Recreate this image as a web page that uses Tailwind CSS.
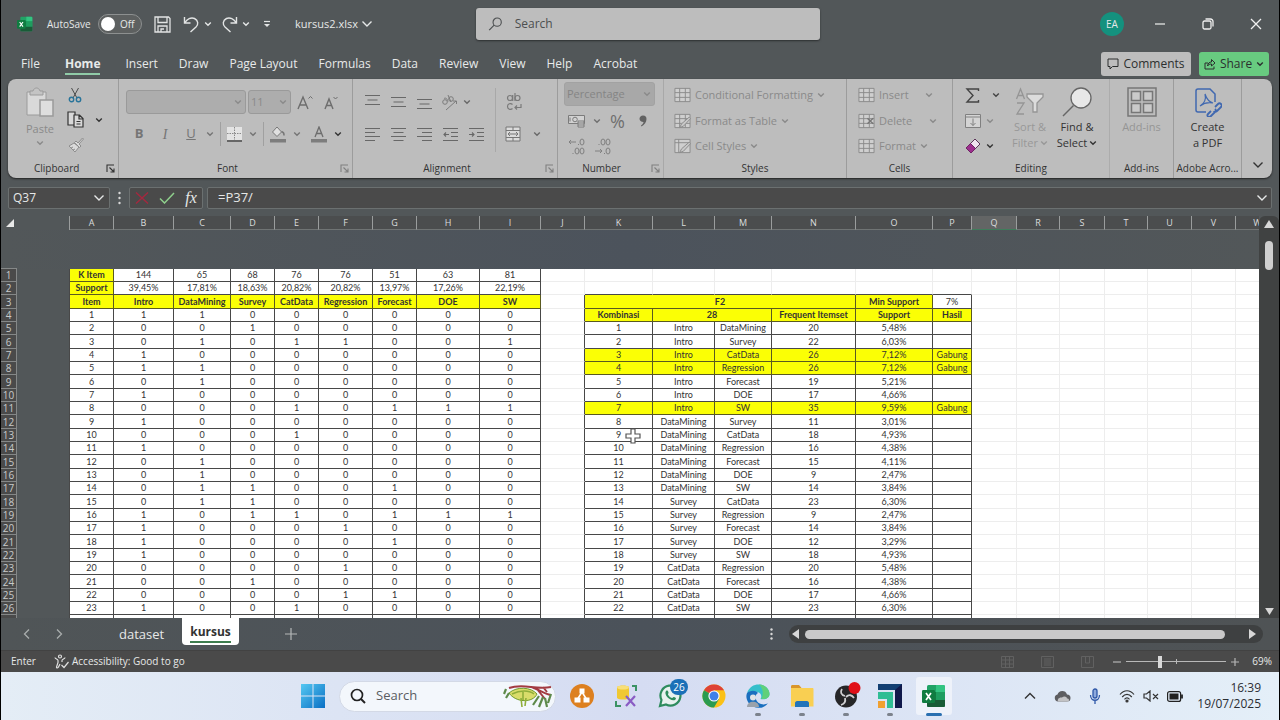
<!DOCTYPE html>
<html lang="en">
<head>
<meta charset="utf-8">
<meta name="viewport" content="width=device-width, initial-scale=1">
<title>kursus2.xlsx</title>
<script src="https://cdn.jsdelivr.net/npm/@tailwindcss/browser@4"></script>
</head>
<body class="flex h-screen flex-col overflow-hidden border-x border-black bg-[#525759] font-['Open_Sans','Noto_Sans',sans-serif] text-[#e6e8e8]">

<!-- Shared icon symbols -->
<svg class="hidden" aria-hidden="true">
  <symbol id="chev" viewBox="0 0 8 8"><path d="M1.2 2.6 4 5.3 6.8 2.6" fill="none" stroke="currentColor" stroke-width="1.4"/></symbol>
  <symbol id="chevL" viewBox="0 0 12 12"><path d="M1.5 3.5 6 8l4.500-4.500" fill="none" stroke="currentColor" stroke-width="1.4"/></symbol>
  <symbol id="launch" viewBox="0 0 9 9"><path d="M1 8V1h7M3.500 3.500 8 8M8 4.500V8H4.500" fill="none" stroke="currentColor" stroke-width="1.1"/></symbol>
  <symbol id="search" viewBox="0 0 16 16"><circle cx="10" cy="6" r="4.500" fill="none" stroke="currentColor" stroke-width="1.2"/><path d="M6.700 9.300 1.300 14.700" stroke="currentColor" stroke-width="1.300"/></symbol>
  <symbol id="excel" viewBox="0 0 24 24"><rect x="5" y="1" width="18" height="22" rx="1.500" fill="#21a366"/><path d="M14 1h7.500A1.500 1.500 0 0 1 23 2.500V8h-9z" fill="#33c481"/><path d="M5 8h9v8H5z" fill="#107c41"/><path d="M14 8h9v8h-9z" fill="#1f9d5f"/><path d="M5 16h18v5.500a1.500 1.500 0 0 1-1.500 1.500h-15A1.500 1.500 0 0 1 5 21.500z" fill="#185c37"/><rect x="0" y="6" width="13" height="13" rx="1.200" fill="#107c41"/><path d="M4 9l5 7M9 9l-5 7" stroke="#fff" stroke-width="1.700"/></symbol>
  <symbol id="sheet" viewBox="0 0 18 16"><path d="M1 1h16v14H1zM1 5.500h16M1 10.500h16M6 1v14M12 1v14" fill="#cfcfcf" stroke="currentColor"/></symbol>
</svg>

<!-- Title bar -->
<header class="flex h-12 shrink-0 items-center">
  <div class="flex w-[475px] shrink-0 items-center pl-4 text-[11px]">
    <svg class="size-4"><use href="#excel"/></svg>
    <label for="autosave" class="ml-[14px] w-[51px] text-[10px]">AutoSave</label>
    <button id="autosave" role="switch" aria-checked="false" class="flex h-5 w-11 items-center gap-[5px] rounded-full border border-[#8d9090] bg-[#5d6060] px-[2px] text-[10px]"><span class="size-[14px] rounded-full bg-white"></span>Off</button>
    <button aria-label="Save" class="ml-3"><svg class="size-[17px]" viewBox="0 0 17 17" fill="none" stroke="#e2e4e4" stroke-width="1.300"><path d="M1 1h13.500L16 2.500V16H1zM4 1v5.500h9V1M4 16v-6h9v6M7 16v-3h3"/></svg></button>
    <button aria-label="Undo" class="ml-3 flex items-center gap-[5px]"><svg class="h-[17px] w-4" viewBox="0 0 16 17" fill="none" stroke="#e2e4e4" stroke-width="1.400"><path d="M1.500 1v6h6M2 6.500C4 3 8 1 11.500 2.500c4 2 4 6 1.500 8.500l-5.500 5"/></svg><svg class="size-2"><use href="#chev"/></svg></button>
    <button aria-label="Redo" class="ml-[10px] flex items-center gap-[4px]"><svg class="h-[17px] w-4" viewBox="0 0 16 17" fill="none" stroke="#e2e4e4" stroke-width="1.400"><path d="M14.500 1v6h-6M14 6.500C12 3 8 1 4.500 2.500c-4 2-4 6-1.500 8.500l5.500 5"/></svg><svg class="size-2"><use href="#chev"/></svg></button>
    <button aria-label="Customize Quick Access Toolbar" class="ml-[13px]"><svg class="size-2" viewBox="0 0 8 8"><path d="M1 1.500h6" stroke="#e2e4e4" stroke-width="1.200"/><path d="M1 4h6L4 7z" fill="#e2e4e4"/></svg></button>
    <button class="ml-6 flex items-center text-[11px]"><span class="w-[66px] text-left">kursus2.xlsx</span><svg class="size-3"><use href="#chevL"/></svg></button>
  </div>
  <label class="flex h-8 w-[344px] shrink-0 items-center gap-3 rounded-[3px] bg-[#bdbdbd] px-3 text-[#4c4f50] shadow-[0_1px_2px_#2c2f30]">
    <svg class="size-4"><use href="#search"/></svg>
    <input aria-label="Search" placeholder="Search" class="w-full bg-transparent text-[12px] placeholder:text-[#4c4f50] focus:outline-none">
  </label>
  <div class="flex flex-1 items-center justify-end pr-[17px]">
    <button class="size-6 rounded-full bg-[#14917e] text-[10px]">EA</button>
    <button aria-label="Minimize" class="ml-[30px]"><svg class="size-3" viewBox="0 0 12 12"><path d="M1 6h10" stroke="#f0f0f0" stroke-width="1.200"/></svg></button>
    <button aria-label="Restore" class="ml-9"><svg class="size-3" viewBox="0 0 12 12" fill="none" stroke="#f0f0f0" stroke-width="1.300"><rect x="1" y="3" width="8" height="8" rx="1.500"/><path d="M3.500 1h5A2.500 2.500 0 0 1 11 3.500v5"/></svg></button>
    <button aria-label="Close" class="ml-9"><svg class="size-3" viewBox="0 0 12 12"><path d="M1 1l10 10M11 1 1 11" stroke="#f0f0f0" stroke-width="1.300"/></svg></button>
  </div>
</header>

<!-- Ribbon tabs -->
<nav class="flex h-[31px] shrink-0 items-center pr-[10px] pl-5 text-[12px] text-[#e8eaea]">
  <div class="flex h-[31px] items-center gap-[21px]">
    <a href="#">File</a>
    <a href="#" class="mx-1 border-b-2 border-[#90cba8] pt-[2px] font-bold">Home</a>
    <a href="#">Insert</a><a href="#">Draw</a><a href="#">Page Layout</a><a href="#">Formulas</a><a href="#">Data</a><a href="#">Review</a><a href="#">View</a><a href="#">Help</a><a href="#">Acrobat</a>
  </div>
  <div class="ml-auto flex gap-2 text-[#2c2f2f]">
    <button class="flex h-6 w-[90px] items-center justify-center gap-1 rounded-[3px] bg-[#bdbdbd]"><svg class="size-3" viewBox="0 0 12 12"><path d="M1 1h10v7.500H5.500L3 11V8.500H1z" fill="none" stroke="currentColor"/></svg>Comments</button>
    <button class="flex h-6 w-[70px] items-center justify-center gap-1 rounded-[3px] bg-[#68cb80]"><svg class="size-3" viewBox="0 0 12 12" fill="none" stroke="currentColor"><path d="M4 5H1v6h9V8.500M3.500 8c.5-3 2-4 4-4V1.500L11 5 7.500 8V6c-2 0-3 .5-4 2z"/></svg>Share<svg class="size-2"><use href="#chev"/></svg></button>
  </div>
</nav>

<!-- Ribbon -->
<section aria-label="Ribbon" class="mx-[7px] flex h-[99px] shrink-0 rounded-lg bg-[#bdbdbd] text-[11px] text-[#8a8a8a] shadow-[0_1px_2px_#222]">
  <div class="flex w-[111px] shrink-0 flex-col border-r border-[#9c9c9c]">
    <div class="flex h-[79px] pt-[3px]">
      <button class="flex w-16 flex-col items-center pt-[5px]">
        <svg class="h-[31px] w-[28px]" viewBox="0 0 28 31"><path d="M1 5h19v23H1z" fill="#d9d9d9" stroke="#9b9b9b"/><path d="M4 8V4h3c1-4 6-4 7 0h3v4z" fill="#c4c4c4" stroke="#9b9b9b"/><path d="M14 13h13v16H14z" fill="#dedede" stroke="#9b9b9b" stroke-width="1.500"/></svg>
        <span class="mt-[3px] leading-4">Paste</span><svg class="mt-[2px] size-2"><use href="#chev"/></svg>
      </button>
      <div class="flex flex-col">
        <button aria-label="Cut" class="flex h-[26px] items-center"><svg class="ml-[-4px] h-4 w-[14px]" viewBox="0 0 14 16"><path d="M3.500 1 9 11M10.500 1 5 11" stroke="#4b4b4b" fill="none"/><circle cx="3.500" cy="12.500" r="2.200" fill="none" stroke="#28749a" stroke-width="1.400"/><circle cx="10.500" cy="12.500" r="2.200" fill="none" stroke="#28749a" stroke-width="1.400"/></svg></button>
        <button aria-label="Copy" class="ml-[-5px] flex h-[26px] items-center gap-[11px] text-[#333]"><svg class="size-[17px]" viewBox="0 0 17 17" fill="#d8d8d8" stroke="currentColor" stroke-width="1.200"><path d="M1 1h7v13H1z"/><path d="M7 4h5.500L16 7.500V16H7zM12 4v4h4M9.500 10.500h4M9.500 13h4"/></svg><svg class="size-2"><use href="#chev"/></svg></button>
        <button aria-label="Format Painter" class="ml-[-4px] flex h-[26px] items-center"><svg class="size-4" viewBox="0 0 16 16" fill="#dadada" stroke="#8d8d8d"><path d="M14.500 1 10 6 8 4 6.500 5.500l5 5L13 9l-2-2 4.500-5zM6 6 1 9l6 6 4-5zM3 11l2-1M5 13l2-1"/></svg></button>
      </div>
    </div>
    <div class="flex h-5 items-center pl-[26px] text-[10px] text-[#333]"><span class="w-[50px]">Clipboard</span><button aria-label="Clipboard settings" class="ml-auto pr-[3px]"><svg class="size-[9px]"><use href="#launch"/></svg></button></div>
  </div>

  <div class="flex w-[234px] shrink-0 flex-col border-r border-[#9c9c9c]">
    <div class="h-[79px] pt-[7px]">
      <div class="flex h-8 items-center gap-[2px] pl-[7px]">
        <div class="relative w-[120px]"><select aria-label="Font" class="h-6 w-full appearance-none rounded-[3px] border border-[#9a9a9a] bg-[#adadad]"><option></option></select><svg class="absolute top-2 right-1 size-2"><use href="#chev"/></svg></div>
        <div class="relative w-[43px]"><select aria-label="Font size" class="h-6 w-full appearance-none rounded-[3px] border border-[#9a9a9a] bg-[#adadad] pl-[2px]"><option>11</option></select><svg class="absolute top-2 right-1 size-2"><use href="#chev"/></svg></div>
        <button aria-label="Increase font size" class="flex w-6 items-center justify-center"><svg class="h-[15px] w-4" viewBox="0 0 16 15" fill="none" stroke="#6d6d6d" stroke-width="1.400"><path d="M1 14 6 2l5 12M2.800 10h6.400"/><path d="M11.500 3.500l2-2 2 2" stroke-width="1"/></svg></button>
        <button aria-label="Decrease font size" class="flex w-6 items-center justify-center"><svg class="h-[15px] w-4" viewBox="0 0 16 15" fill="none" stroke="#6d6d6d" stroke-width="1.400"><path d="M2 14 6 4l4 10M3.500 10.500h5"/><path d="M10.500 2l2 2 2-2" stroke-width="1"/></svg></button>
      </div>
      <div class="flex h-8 items-center pl-[7px] text-[13px] text-[#757575]">
        <button class="w-[26px] font-bold">B</button><button class="w-[26px] font-['Liberation_Serif',serif] text-[14px] italic">I</button><button class="w-[26px] underline">U</button>
        <button aria-label="Underline options" class="flex w-3 justify-center"><svg class="size-2"><use href="#chev"/></svg></button>
        <span class="mx-1 h-6 w-px bg-[#a0a0a0]"></span>
        <button aria-label="Borders" class="flex w-[18px] justify-center"><svg class="size-[15px]" viewBox="0 0 15 15"><path d="M0 0h15v13H0z" fill="#e4e4e4"/><path d="M7.500 0v13M0 6.500h15" stroke="#8a8a8a" stroke-dasharray="1.500 1"/><path d="M0 14h15" stroke="#666" stroke-width="2"/></svg></button>
        <button aria-label="Border options" class="flex w-5 justify-center"><svg class="size-2"><use href="#chev"/></svg></button>
        <span class="mr-[2px] h-6 w-px bg-[#a0a0a0]"></span>
        <button aria-label="Fill color" class="flex w-6 justify-center"><svg class="h-[17px] w-4" viewBox="0 0 16 17"><path d="M7 1 2.500 6 7 10.500 11.500 6z" fill="#e0e0e0" stroke="#777"/><path d="M11.500 5.500c3 1 2.500 2.500 2.500 4" fill="none" stroke="#777" stroke-width="1.500"/><path d="M0 13h16v3.500H0z" fill="#7d7d7d"/></svg></button>
        <button aria-label="Fill color options" class="flex w-[14px] justify-center"><svg class="size-2"><use href="#chev"/></svg></button>
        <button aria-label="Font color" class="flex w-[30px] justify-center"><svg class="h-[17px] w-4" viewBox="0 0 16 17"><path d="M4 11 8 1l4 10M5.500 7.500h5" fill="none" stroke="#6c6c6c" stroke-width="1.300"/><path d="M0 13h16v3.500H0z" fill="#7d7d7d"/></svg></button>
        <button aria-label="Font color options" class="flex w-2 justify-center text-[#333]"><svg class="size-2"><use href="#chev"/></svg></button>
      </div>
    </div>
    <div class="flex h-5 items-center pr-[3px] text-[10px] text-[#333]"><span class="flex-1 pr-4 pl-3 text-center">Font</span><svg class="size-[9px] text-[#808080]"><use href="#launch"/></svg></div>
  </div>

  <div class="flex w-[205px] shrink-0 flex-col border-r border-[#9c9c9c] text-[#686868]">
    <div class="flex h-[79px] pt-[7px]">
      <div class="w-[142px] pl-[6px]">
        <div class="flex h-8 items-center">
          <button aria-label="Top align" class="flex w-[26px] justify-center pb-1"><svg class="h-3 w-[15px]" viewBox="0 0 15 12"><path d="M0 1.500h15M2.500 6h10M0 10.500h15" stroke="currentColor" stroke-width="1.200"/></svg></button>
          <button aria-label="Middle align" class="flex w-[26px] justify-center"><svg class="h-3 w-[15px]" viewBox="0 0 15 12"><path d="M0 1.500h15M2.500 6h10M0 10.500h15" stroke="currentColor" stroke-width="1.200"/></svg></button>
          <button aria-label="Bottom align" class="flex w-[26px] justify-center pt-1"><svg class="h-3 w-[15px]" viewBox="0 0 15 12"><path d="M0 1.500h15M2.500 6h10M0 10.500h15" stroke="currentColor" stroke-width="1.200"/></svg></button>
          <button aria-label="Orientation" class="flex w-[24px] justify-center"><svg class="size-[17px]" viewBox="0 0 17 17" fill="none" stroke="#7c7c7c"><circle cx="4" cy="8" r="2.300"/><path d="M3 4.500c2-1 3 0 4 3M7 1l3 7"/><circle cx="10" cy="5" r="2.300"/><path d="M5 16 15 7M12 7h3.500v3"/></svg></button>
          <button aria-label="Orientation options" class="pl-[2px]"><svg class="size-2"><use href="#chev"/></svg></button>
        </div>
        <div class="flex h-8 items-center">
          <button aria-label="Align left" class="flex w-[26px] justify-center"><svg class="h-[15px] w-[15px]" viewBox="0 0 15 15"><path d="M0 1.500h15M0 5.500h10M0 9.500h15M0 13.500h10" stroke="currentColor" stroke-width="1.200"/></svg></button>
          <button aria-label="Center" class="flex w-[26px] justify-center"><svg class="h-[15px] w-[15px]" viewBox="0 0 15 15"><path d="M0 1.500h15M2.500 5.500h10M0 9.500h15M2.500 13.500h10" stroke="currentColor" stroke-width="1.200"/></svg></button>
          <button aria-label="Align right" class="flex w-[26px] justify-center"><svg class="h-[15px] w-[15px]" viewBox="0 0 15 15"><path d="M0 1.500h15M5 5.500h10M0 9.500h15M5 13.500h10" stroke="currentColor" stroke-width="1.200"/></svg></button>
          <button aria-label="Decrease indent" class="flex w-[26px] justify-center"><svg class="h-[15px] w-[15px]" viewBox="0 0 15 15"><path d="M0 1.500h15M8 5.500h7M8 9.500h7M0 13.500h15M6 7.500H1M3 5.500l-2 2 2 2" fill="none" stroke="currentColor" stroke-width="1.100"/></svg></button>
          <button aria-label="Increase indent" class="flex w-[26px] justify-center"><svg class="h-[15px] w-[15px]" viewBox="0 0 15 15"><path d="M0 1.500h15M8 5.500h7M8 9.500h7M0 13.500h15M0 7.500h5M3 5.500l2 2-2 2" fill="none" stroke="currentColor" stroke-width="1.100"/></svg></button>
        </div>
      </div>
      <span class="mt-[2px] h-16 w-px bg-[#a8a8a8]"></span>
      <div class="pl-2">
        <button aria-label="Wrap text" class="flex h-8 w-5 justify-center pt-[6px]"><svg class="h-5 w-4" viewBox="0 0 16 20" fill="none" stroke="#7a7a7a" stroke-width="1.200"><circle cx="4" cy="6" r="2.500"/><path d="M6.700 3v6M9 1v8"/><circle cx="11.500" cy="6" r="2.500"/><path d="M6.500 12.500c-2-2-5-.5-5 2s3 4 5 2M9 15.500h6V12M11 13.500l-2 2 2 2"/></svg></button>
        <div class="flex h-8 items-center gap-3"><button aria-label="Merge and center" class="pl-[1px]"><svg class="size-4" viewBox="0 0 16 16"><path d="M1 1h14v14H1zM1 4.500h14M1 11.500h14M8 1v3.500M8 11.500V15" fill="#dcdcdc" stroke="#777"/><path d="M3 8h10M5 6 3 8l2 2M11 6l2 2-2 2" fill="none" stroke="#777"/></svg></button><button aria-label="Merge options"><svg class="size-2"><use href="#chev"/></svg></button></div>
      </div>
    </div>
    <div class="flex h-5 items-center pr-[3px] text-[10px] text-[#333]"><span class="flex-1 pr-1 text-center">Alignment</span><svg class="size-[9px] text-[#808080]"><use href="#launch"/></svg></div>
  </div>

  <div class="flex w-[106px] shrink-0 flex-col border-r border-[#a8a8a8]">
    <div class="h-[79px] pt-[3px]">
      <div class="relative ml-[6px] w-[91px] pb-[2px]"><select aria-label="Number format" class="h-6 w-full appearance-none rounded-[3px] border border-[#a2a2a2] bg-[#a8a8a8] pl-[2px] text-[11px] text-[#858585]"><option>Percentage</option></select><svg class="absolute top-2 right-1 size-2"><use href="#chev"/></svg></div>
      <div class="flex h-[26px] items-center pl-[10px] text-[#6f6f6f]">
        <button aria-label="Accounting format" class="flex items-center gap-2"><svg class="h-[14px] w-[17px]" viewBox="0 0 17 14" fill="#d2d2d2" stroke="#7b7b7b"><path d="M.5 1.500h16v8H.5z"/><circle cx="7" cy="5.500" r="2.300"/><path d="M2 3.500v4M10 7h6v6h-6zM10 9h6M10 11h6"/></svg><svg class="size-2"><use href="#chev"/></svg></button>
        <button aria-label="Percent style" class="ml-2 w-[17px] text-[18px] leading-6">%</button>
        <button aria-label="Comma style" class="ml-[13px]"><svg class="h-3 w-2" viewBox="0 0 8 12"><path d="M4 .5c2.500 0 3.500 1.500 3.500 3.500 0 3-2 6-5 7.500l-.5-1c2-1.500 2.500-2.500 2.500-3.500C2 7 .5 5.500.5 3.800.5 2 2 .5 4 .5z" fill="#626262"/></svg></button>
      </div>
      <div class="flex h-6 items-center gap-[9px] pl-[10px] text-[#808080]">
        <button aria-label="Increase decimal"><svg class="h-[17px] w-[17px]" viewBox="0 0 17 17" fill="none" stroke="currentColor"><path d="M8 4H1M3 2 1 4l2 2"/><ellipse cx="14" cy="4" rx="2" ry="3"/><ellipse cx="9" cy="13" rx="2" ry="3"/><ellipse cx="14" cy="13" rx="2" ry="3"/><path d="M4.500 15.500h1M10 6.500h1"/></svg></button>
        <button aria-label="Decrease decimal"><svg class="h-[17px] w-[17px]" viewBox="0 0 17 17" fill="none" stroke="currentColor"><path d="M1 13h7M6 11l2 2-2 2"/><ellipse cx="9" cy="4" rx="2" ry="3"/><ellipse cx="14" cy="4" rx="2" ry="3"/><ellipse cx="14" cy="13" rx="2" ry="3"/><path d="M4.500 6.500h1M10 15.500h1"/></svg></button>
      </div>
    </div>
    <div class="flex h-5 items-center pr-[3px] text-[10px] text-[#333]"><span class="flex-1 pr-[6px] text-center">Number</span><svg class="size-[9px] text-[#808080]"><use href="#launch"/></svg></div>
  </div>

  <div class="flex w-[183px] shrink-0 flex-col border-r border-[#9c9c9c]">
    <div class="flex h-[79px] flex-col items-start pt-[3px] pl-[10px]">
      <button class="flex h-[26px] items-center gap-1"><svg class="h-4 w-[17px]"><use href="#sheet"/></svg>Conditional Formatting<svg class="size-2"><use href="#chev"/></svg></button>
      <button class="flex h-[26px] items-center gap-1"><svg class="h-4 w-[17px]" viewBox="0 0 18 16"><path d="M1 1h16v14H1zM1 5.500h16M1 10.500h16M6 1v14M12 1v14" fill="#cfcfcf" stroke="currentColor"/><path d="M6 15l2-4 8-7 1.500 1.500-7.500 8z" fill="#c8c8c8" stroke="currentColor"/></svg>Format as Table<svg class="size-2"><use href="#chev"/></svg></button>
      <button class="flex h-6 items-center gap-1"><svg class="h-4 w-[17px]" viewBox="0 0 18 16"><path d="M1 1h16v14H1zM1 4.500h16M5 1v14" fill="#cfcfcf" stroke="currentColor"/><path d="M6 15l2-4 8-7 1.500 1.500-7.500 8z" fill="#c8c8c8" stroke="currentColor"/></svg>Cell Styles<svg class="size-2"><use href="#chev"/></svg></button>
    </div>
    <div class="h-5 text-center text-[10px] leading-5 text-[#333]">Styles</div>
  </div>

  <div class="flex w-[106px] shrink-0 flex-col border-r border-[#9c9c9c]">
    <div class="flex h-[79px] flex-col items-start pt-[3px] pl-[11px]">
      <button class="flex h-[26px] items-center gap-1"><svg class="h-4 w-[17px]"><use href="#sheet"/></svg><span class="w-[42px] text-left">Insert</span><svg class="size-2"><use href="#chev"/></svg></button>
      <button class="flex h-[26px] items-center gap-1"><svg class="h-4 w-[17px]" viewBox="0 0 18 16"><path d="M1 1h16v14H1zM1 5.500h16M1 10.500h16M6 1v14M12 1v14" fill="#cfcfcf" stroke="currentColor"/><path d="M10 5l6 6M16 5l-6 6" stroke="#777" stroke-width="1.500"/></svg><span class="w-[46px] text-left">Delete</span><svg class="size-2"><use href="#chev"/></svg></button>
      <button class="flex h-6 items-center gap-1"><svg class="h-4 w-[17px]"><use href="#sheet"/></svg>Format<svg class="size-2"><use href="#chev"/></svg></button>
    </div>
    <div class="h-5 text-center text-[10px] leading-5 text-[#333]">Cells</div>
  </div>

  <div class="flex w-[157px] shrink-0 flex-col border-r border-[#acacac]">
    <div class="flex h-[79px] pt-[3px] pl-3">
      <div class="flex w-[42px] flex-col">
        <button aria-label="AutoSum" class="flex h-[26px] items-center gap-[11px] text-[#444]"><svg class="h-[15px] w-4" viewBox="0 0 16 15"><path d="M13.500 3V1H2l6 6.500L2 14h11.500v-2" fill="none" stroke="currentColor" stroke-width="1.400"/></svg><svg class="size-2"><use href="#chev"/></svg></button>
        <button aria-label="Fill" class="flex h-[26px] items-center gap-[5px]"><svg class="h-[14px] w-4" viewBox="0 0 16 14"><path d="M.5.5h15v13H.5zM.5 3h15" fill="#d4d4d4" stroke="#808080"/><path d="M8 4.500v7M5.500 9 8 11.500 10.500 9" fill="none" stroke="#808080"/></svg><svg class="size-2"><use href="#chev"/></svg></button>
        <button aria-label="Clear" class="flex h-6 items-center gap-[5px] text-[#333]"><svg class="size-4" viewBox="0 0 16 16"><path d="M10 1 15 6 6 15 1 10z" fill="#efe3ee" stroke="#5b3457"/><path d="M5.500 5.500 10.500 10.500 6 15 1 10z" fill="#9d2f8d" stroke="#6f2465"/></svg><svg class="size-2"><use href="#chev"/></svg></button>
      </div>
      <button class="flex w-[46px] flex-col items-center pt-[5px] leading-4 text-[#989898]"><svg class="mb-[2px] h-[30px] w-[30px]" viewBox="0 0 30 30" fill="none" stroke="#959595" stroke-width="1.300"><path d="M1.500 12 5.500 2l4 10M3 8.500h5M2 16h7L2 27h7"/><path d="M12 7h16v3l-6 6v9h-4v-9l-6-6z" fill="#dcdcdc"/></svg>Sort &amp;<span class="flex items-center gap-[2px]">Filter<svg class="size-2"><use href="#chev"/></svg></span></button>
      <button class="flex w-[48px] flex-col items-center pt-[5px] leading-4 text-[#333]"><svg class="mb-[2px] h-[30px] w-[30px]" viewBox="0 0 30 30"><circle cx="19" cy="11" r="10" fill="#e8e8e8" stroke="#666" stroke-width="1.300"/><path d="M11.500 18.500 1 29" stroke="#666" stroke-width="1.500"/></svg><span class="whitespace-nowrap">Find &amp;</span><span class="flex items-center gap-[2px]">Select<svg class="size-2"><use href="#chev"/></svg></span></button>
    </div>
    <div class="h-5 text-center text-[10px] leading-5 text-[#333]">Editing</div>
  </div>

  <div class="flex w-[64px] shrink-0 flex-col border-r border-[#9c9c9c]">
    <button class="flex h-[79px] flex-col items-center pt-2 leading-4 text-[#959595]"><svg class="mb-[2px] h-[30px] w-[30px]" viewBox="0 0 30 30" fill="none" stroke="#777" stroke-width="1.500"><path d="M1 1h28v28H1z"/><path d="M4.500 4.500h9v9h-9zM16.500 4.500h9v9h-9zM4.500 16.500h9v9h-9zM16.500 16.500h9v9h-9z" fill="#cacaca"/></svg>Add-ins</button>
    <div class="h-5 text-center text-[10px] leading-5 text-[#333]">Add-ins</div>
  </div>

  <div class="flex w-[68px] shrink-0 flex-col border-r border-[#9c9c9c]">
    <button class="flex h-[79px] flex-col items-center pt-2 leading-4 text-[#333]"><svg class="mb-[2px] h-[30px] w-[28px]" viewBox="0 0 28 30" fill="none" stroke="#4068b0" stroke-width="1.500"><path d="M12 25H4a2 2 0 0 1-2-2V4a2 2 0 0 1 2-2h12l5 5v8"/><path d="M6 19c5-3 6-8 5-12 2 6 4 8 8 9-5-1-9 0-13 3z" stroke-width="1.200"/><path d="m17 24-3 3c-2 2 1 4 3 2l4-4c1-1 1-2 0-3M21 20l3-3c2-2 5 1 3 3l-4 4c-1 1-3 1-3 0" stroke-width="1.800"/></svg>Create<br>a PDF</button>
    <div class="h-5 text-center text-[10px] leading-5 whitespace-nowrap text-[#333]">Adobe Acro...</div>
  </div>
  <button aria-label="Collapse ribbon" class="ml-auto flex items-end pr-2 pb-[7px] text-[#333]"><svg class="size-3"><use href="#chevL"/></svg></button>
</section>

<!-- Formula bar -->
<section aria-label="Formula bar" class="mx-[7px] mt-[9px] mb-[7px] flex h-[22px] shrink-0 items-center text-[12px]">
  <div class="flex h-full w-[102px] items-center rounded-[2px] border border-[#6b7070] bg-[#4a4a4a] px-1"><input aria-label="Name box" value="Q37" class="w-full bg-transparent focus:outline-none"><svg class="size-3 shrink-0"><use href="#chevL"/></svg></div>
  <svg class="mx-2 h-[14px] w-[3px]" viewBox="0 0 3 14" fill="#d8d8d8"><circle cx="1.500" cy="2" r="1.200"/><circle cx="1.500" cy="7" r="1.200"/><circle cx="1.500" cy="12" r="1.200"/></svg>
  <div class="flex h-full w-[74px] items-center justify-around rounded-[2px] border border-[#6b7070] bg-[#4a4a4a]">
    <button aria-label="Cancel"><svg class="h-3 w-[14px]" viewBox="0 0 14 12"><path d="M1 .5 13 11.500M13 .5 1 11.500" stroke="#a5283f" stroke-width="1.400"/></svg></button>
    <button aria-label="Enter"><svg class="h-3 w-4" viewBox="0 0 16 12"><path d="M1 6.500 5.500 11 15 1" fill="none" stroke="#8fcf8c" stroke-width="1.500"/></svg></button>
    <button aria-label="Insert function" class="font-['Liberation_Serif',serif] text-[16px] leading-4 italic">fx</button>
  </div>
  <div class="ml-1 flex h-full flex-1 items-center rounded-[2px] border border-[#6b7070] bg-[#4a4a4a] pr-[3px] pl-[10px]"><input aria-label="Formula" value="=P37/" class="w-full bg-transparent text-[13px] focus:outline-none"><svg class="size-3 shrink-0"><use href="#chevL"/></svg></div>
</section>

<!-- Worksheet -->
<main class="flex min-h-0 flex-1">
  <div class="relative min-w-0 flex-1 overflow-hidden">
    <div class="absolute inset-x-0 top-[14px] h-[39px] bg-linear-to-r from-[#525759] via-[#4c535c] to-[#525759]"></div>
    <table class="relative w-full min-w-[1279px] table-fixed border-separate border-spacing-0 text-center font-['Lato',sans-serif] text-[9px] leading-[12px] text-[#333]">
      <colgroup>
        <col class="w-[16px]"><col class="w-[53px]">
        <col class="w-[44px]"><col class="w-[60px]"><col class="w-[57px]"><col class="w-[44px]"><col class="w-[44px]"><col class="w-[54px]"><col class="w-[44px]"><col class="w-[63px]"><col class="w-[61px]"><col class="w-[44px]"><col class="w-[68px]"><col class="w-[62px]"><col class="w-[57px]"><col class="w-[84px]"><col class="w-[77px]"><col class="w-[39px]"><col class="w-[45px]"><col class="w-[43px]"><col class="w-[45px]"><col class="w-[43px]"><col class="w-[44px]"><col class="w-[44px]"><col>
      </colgroup>
      <thead id="letters"></thead>
      <tbody id="cells"></tbody>
    </table>
    <svg class="absolute top-[212px] left-[624px] size-4" viewBox="0 0 16 16"><path d="M6 1h4v5h5v4h-5v5H6v-5H1V6h5z" fill="#fff" stroke="#555" stroke-width="1.200"/></svg>
  </div>
  <div class="flex w-[20px] shrink-0 flex-col items-center rounded-t-md bg-[#404242]">
    <button aria-label="Scroll up" class="py-1"><svg class="h-[8px] w-[10px]" viewBox="0 0 10 8"><path d="M5 0l5 8H0z" fill="#d8d8d8"/></svg></button>
    <div class="mt-[9px] h-[29px] w-2 rounded-full bg-[#cfcfcf]"></div>
    <button aria-label="Scroll down" class="mt-auto pb-[3px]"><svg class="h-[7px] w-[9px]" viewBox="0 0 10 8"><path d="M5 8l5-8H0z" fill="#d8d8d8"/></svg></button>
  </div>
</main>

<!-- Sheet tabs -->
<nav aria-label="Sheets" class="flex h-8 shrink-0 items-center bg-linear-to-r from-[#505557] via-[#4b525a] to-[#4f5355]">
  <button aria-label="Previous sheet" class="ml-5"><svg class="size-3" viewBox="0 0 12 12"><path d="M8 1.500 3.500 6 8 10.500" fill="none" stroke="#a9adad" stroke-width="1.300"/></svg></button>
  <button aria-label="Next sheet" class="ml-5"><svg class="size-3" viewBox="0 0 12 12"><path d="M4 1.500 8.500 6 4 10.500" fill="none" stroke="#a9adad" stroke-width="1.300"/></svg></button>
  <a href="#" class="ml-[54px] w-[63px] pt-[2px] text-[13px]">dataset</a>
  <a href="#" class="flex h-[27px] w-[57px] justify-center self-start rounded-b-[4px] bg-white text-[12px] font-bold text-[#333]"><span class="mt-[5px] h-5 border-b-2 border-[#3d7d4f]">kursus</span></a>
  <button aria-label="New sheet" class="ml-[46px]"><svg class="size-3" viewBox="0 0 12 12"><path d="M6 0v12M0 6h12" stroke="#b5b8b8" stroke-width="1.200"/></svg></button>
  <svg class="ml-auto h-3 w-[3px]" viewBox="0 0 3 12" fill="#d8d8d8"><circle cx="1.500" cy="1.500" r="1.200"/><circle cx="1.500" cy="6" r="1.200"/><circle cx="1.500" cy="10.500" r="1.200"/></svg>
  <div class="mr-[16px] ml-4 flex h-[18px] w-[474px] items-center rounded-full bg-[#3e4041] px-[3px]">
    <button aria-label="Scroll left"><svg class="h-[10px] w-[7px]" viewBox="0 0 7 10"><path d="M0 5l7-5v10z" fill="#d8d8d8"/></svg></button>
    <div class="ml-[6px] h-[9px] w-[420px] rounded-full bg-[#c9c9c9]"></div>
    <button aria-label="Scroll right" class="ml-auto pr-1"><svg class="h-[10px] w-[7px]" viewBox="0 0 7 10"><path d="M7 5 0 0v10z" fill="#d8d8d8"/></svg></button>
  </div>
</nav>

<!-- Status bar -->
<footer class="flex h-[22px] shrink-0 items-center border-t border-[#424242] bg-[#4a4a4a] pr-[7px] pl-[10px] text-[10px]">
  <span class="w-[43px]">Enter</span>
  <svg class="mr-[3px] size-[15px]" viewBox="0 0 15 15" fill="none" stroke="#e0e0e0" stroke-width="1.200"><circle cx="6" cy="2.500" r="1.500"/><path d="M1 3.500c0 1.500 3 1.500 3 3v2L2.500 13c0 1.500 1.500 1 2 0L6 10M11 3.500c0 1.500-3 1.500-3 3V8M7.500 11l2.500 2.500L14.500 8"/></svg>
  <span>Accessibility: Good to go</span>
  <div class="ml-auto flex items-center">
    <svg class="h-3 w-[13px] text-[#616161]" viewBox="0 0 13 12"><path d="M.5.5h12v11H.5zM.5 4h12M.5 8h12M4.500 0v12M8.500 0v12" fill="none" stroke="currentColor"/></svg>
    <svg class="ml-[27px] h-3 w-[13px] text-[#616161]" viewBox="0 0 13 12"><path d="M.5.5h12v11H.5zM3 3h7M3 5h7M3 7h7M3 9h7" fill="none" stroke="currentColor"/></svg>
    <svg class="ml-[27px] h-3 w-[13px] text-[#616161]" viewBox="0 0 13 12"><path d="M.5.5h12v11H.5zM4.500 0v7h4V0" fill="none" stroke="currentColor"/></svg>
    <button aria-label="Zoom out" class="ml-[19px]"><svg class="size-2" viewBox="0 0 8 8"><path d="M0 4h8" stroke="#b5b5b5" stroke-width="1.200"/></svg></button>
    <input type="range" aria-label="Zoom" min="0" max="100" value="33" class="mx-[5px] h-3 w-[100px] appearance-none bg-[linear-gradient(#b8b8b8,#b8b8b8),linear-gradient(#b8b8b8,#b8b8b8)] bg-[length:100%_1px,1px_5px] bg-center bg-no-repeat [&::-webkit-slider-thumb]:h-3 [&::-webkit-slider-thumb]:w-1 [&::-webkit-slider-thumb]:appearance-none [&::-webkit-slider-thumb]:bg-[#d8d8d8]">
    <button aria-label="Zoom in"><svg class="size-2" viewBox="0 0 8 8"><path d="M0 4h8M4 0v8" stroke="#b5b5b5" stroke-width="1.200"/></svg></button>
    <span class="ml-[10px] w-[23px] text-right">69%</span>
  </div>
</footer>

<!-- Taskbar -->
<footer class="flex h-12 shrink-0 items-center bg-linear-to-r from-[#e4edf6] via-[#d5dcf2] to-[#e4eff8] text-[#2b2e33]">
  <button aria-label="Start" class="ml-[300px]"><svg class="size-6" viewBox="0 0 24 24"><defs><linearGradient id="win" x1="0" y1="0" x2="1" y2="1"><stop stop-color="#55c8f2"/><stop offset="1" stop-color="#0a6fc4"/></linearGradient></defs><path d="M0 0h11.500v11.500H0zM12.500 0H24v11.500H12.500zM0 12.500h11.500V24H0zM12.500 12.500H24V24H12.500z" fill="url(#win)"/></svg></button>
  <label class="ml-[14px] flex h-[31px] w-[217px] items-center gap-[10px] rounded-full border border-[#d3d9e6] bg-[#f3f7fc] pr-0 pl-[10px]">
    <svg class="size-4 shrink-0" viewBox="0 0 16 16"><circle cx="7" cy="7" r="5.500" fill="none" stroke="#222" stroke-width="1.700"/><path d="M11 11l4 4" stroke="#222" stroke-width="1.900"/></svg>
    <input aria-label="Search Windows" placeholder="Search" class="w-full min-w-0 bg-transparent text-[13px] placeholder:text-[#5a5d62] focus:outline-none">
    <svg class="h-[25px] w-[52px] shrink-0" viewBox="0 0 52 25" fill="none"><path d="M6 9c8-7 22-6 28 1-4 9-21 9-28-1z" fill="#d9dc6a" stroke="#6f9a2c"/><path d="M9 10c8-4 17-4 22 0M18 14l1 9M23 14l-1 8M20 8v8" stroke="#8fae3a" stroke-width="1.600"/><path d="M6 4C20-1 32 6 48 3M28 3c8 2 12 7 20 8M34 5l8 10M40 3l4 5" stroke="#a33b42" stroke-width="2"/><path d="M36 12l-6 9M40 13l-4 10M42 14l2 9M48 10l-3 9M3 5 1 10M6 9l-3 5" stroke="#5e8a4b" stroke-width="2.200"/></svg>
  </label>
  <div class="ml-[4px] flex h-full items-center">
    <button aria-label="Diagrams" class="flex w-11 justify-center"><svg class="size-6" viewBox="0 0 24 24"><circle cx="12" cy="12" r="12" fill="#dd8020"/><path d="M12 8 7 16M12 8l5 8" stroke="#fff" stroke-width="1.500"/><path d="M9.500 4.500h5v5h-5zM4.500 13.500h6v5h-6zM13.500 13.500h6v5h-6z" fill="#fff"/></svg></button>
    <button aria-label="Database tools" class="flex w-11 justify-center"><svg class="size-6" viewBox="0 0 24 24" fill="none"><path d="M3 3c2-2 10-2 12 0v11c-2 2-10 2-12 0z" fill="#f0c832"/><ellipse cx="9" cy="3.500" rx="6" ry="2" fill="#f8df78"/><path d="M18 2h4v5M2 17v5h5" stroke="#3b9264" stroke-width="2"/><path d="m12 12 9 10M21 12l-9 10" stroke="#8a5cc4" stroke-width="2.200"/></svg></button>
    <button aria-label="WhatsApp" class="relative flex w-11 justify-center"><svg class="size-6" viewBox="0 0 24 24"><path d="M2 22l1.500-6A10 10 0 1 1 8 20.500z" fill="#e8f2ef" stroke="#2e8c5e" stroke-width="2.200"/><path d="M8 7c1-1 2-.5 2.500 1.500.3 1-.8 1.300-.5 2 1 2 2 3 4 3.500.7 0 1-1.300 2-1 2 .8 2.500 1.500 1.500 2.500C14 19 5 11 8 7z" fill="#2e8c5e"/></svg><span class="absolute -top-[5px] left-[22px] flex h-4 w-[18px] items-center justify-center rounded-full bg-[#1b70b8] text-[10px] text-white">26</span></button>
    <button aria-label="Chrome" class="flex w-11 justify-center"><svg class="size-6" viewBox="0 0 24 24"><circle cx="12" cy="12" r="11.500" fill="#fbc116"/><path d="M12 12 2 6.200A11.500 11.500 0 0 1 22 6.200H12z" fill="#de4236"/><path d="M2 6.200A11.500 11.500 0 0 0 12 23.500l5-8.500-5-3z" fill="#2a9b50"/><circle cx="12" cy="12" r="5.600" fill="#fff"/><circle cx="12" cy="12" r="4.500" fill="#4080e8"/></svg></button>
    <button aria-label="Edge" class="relative flex h-full w-11 items-center justify-center"><svg class="size-6" viewBox="0 0 24 24"><path d="M1 9C3 3 8 .5 12.500.5 19 .5 23.500 5 23.500 10c0 4-4 6-9 5 1.500-2 1-6-3-7C7 7 3 7 1 9z" fill="#35bfcb"/><path d="M13 .5C19 .5 23.500 5 23.500 10c0 4-4 5.500-8 5 2-5 2-10-2.500-14.500z" fill="#5fd07a"/><path d="M1 9c3-3 9-3 11 0-4 2-3 9 3 11 2.500.8 5 .5 7-1-3 5-10 6-15 3.500S-1 14 1 9z" fill="#1a6fbf"/><circle cx="7" cy="13.500" r="3" fill="#e0e3e6"/><path d="M1 23c0-7 12-7 12 0z" fill="#9aa2ab"/></svg><span class="absolute bottom-1 h-[3px] w-[6px] rounded-full bg-[#7c828c]"></span></button>
    <button aria-label="File Explorer" class="relative flex h-full w-11 items-center justify-center"><svg class="size-6" viewBox="0 0 24 24"><path d="M1 2.500C1 1.500 1.500 1 2.500 1H9l2.500 3H1z" fill="#d9952a"/><path d="M1 4h21.500c.5 0 1 .5 1 1v17.500H1z" fill="#f9cf52"/><path d="M5 23v-4c0-1 1-2 2-2h10c1 0 2 1 2 2v4z" fill="#2274ba"/></svg><span class="absolute bottom-1 h-[3px] w-[6px] rounded-full bg-[#7c828c]"></span></button>
    <button aria-label="OBS Studio" class="relative flex h-full w-11 items-center justify-center"><svg class="size-6 overflow-visible" viewBox="0 0 24 24"><circle cx="12" cy="12.500" r="11" fill="#262628"/><path d="M11 12c-4-1-5-4-3-7M12 13c3-3 6-2 8 1M11 14c1 4-1 6-4 7" fill="none" stroke="#d0d0d2" stroke-width="1.800"/><circle cx="20.500" cy="4" r="6" fill="#e01018"/></svg><span class="absolute bottom-1 h-[3px] w-[6px] rounded-full bg-[#7c828c]"></span></button>
    <button aria-label="Desktop app" class="relative flex h-full w-11 items-center justify-center"><svg class="size-6" viewBox="0 0 24 24"><path d="M0 0h24v24h-7V6H0z" fill="#10184a"/><path d="M0 0h24l-7 6H0z" fill="#123f72"/><path d="M0 8h15v16H9V15H0z" fill="#2fbd94"/><path d="M0 17h7v7H0z" fill="#f0a030"/></svg><span class="absolute bottom-1 h-[3px] w-[6px] rounded-full bg-[#7c828c]"></span></button>
    <button aria-label="Excel" class="relative flex h-full w-11 items-center justify-center"><span class="flex h-[38px] w-9 items-center justify-center rounded-[3px] bg-[#eef2fa]"><svg class="size-6"><use href="#excel"/></svg></span><span class="absolute bottom-1 h-[3px] w-4 rounded-full bg-[#2a6fb0]"></span></button>
  </div>
  <div class="ml-auto flex items-center">
    <svg class="h-3 w-3" viewBox="0 0 12 12"><path d="M1 8.500 6 3.500l5 5" fill="none" stroke="#333" stroke-width="1.400"/></svg>
    <svg class="ml-[18px] h-3 w-[17px]" viewBox="0 0 17 12"><path d="M4 11.500a3.500 3.500 0 0 1-.5-6.900A5 5 0 0 1 13 4.500a3.500 3.500 0 0 1 0 7z" fill="#5d5d60"/><path d="M4 11.500c-1-2 1-4.500 4-4 2-2 5-1 5 1 2 0 3 2 1 3z" fill="#c3c3c5"/></svg>
    <svg class="ml-[18px] h-4 w-3" viewBox="0 0 12 16" fill="none" stroke="#2f58a8" stroke-width="1.300"><rect x="4" y="1" width="4" height="9" rx="2" fill="#8da9dc"/><path d="M1.500 7c0 7 9 7 9 0M6 12.500V16"/></svg>
    <svg class="ml-[18px] h-[14px] w-[16px]" viewBox="0 0 16 14" fill="none" stroke="#333" stroke-width="1.200"><path d="M1 5.500c4-5 10-5 14 0M3.200 8c3-3.500 6.600-3.500 9.600 0M5.500 10.300c1.500-1.800 3.500-1.800 5 0"/><circle cx="8" cy="12" r="1" fill="#333"/></svg>
    <svg class="ml-2 h-3 w-4" viewBox="0 0 16 12" fill="none" stroke="#333" stroke-width="1.200"><path d="M1 4h2.500L7 1v10L3.500 8H1zM10 4l5 5M15 4l-5 5"/></svg>
    <svg class="ml-2 h-[11px] w-4" viewBox="0 0 16 11"><rect x=".6" y=".6" width="13" height="9.800" rx="2" fill="none" stroke="#222" stroke-width="1.200"/><path d="M2.500 2.500h9v6h-9z" fill="#222"/><path d="M15 3.500v4" stroke="#222" stroke-width="1.800"/></svg>
    <div class="mr-[18px] w-[78px] text-right text-[12px] leading-4"><div>16:39</div><div>19/07/2025</div></div>
  </div>
</footer>

<script>
  const letters = [...'ABCDEFGHIJKLMNOPQRSTUVW'];
  const tone = {
    plain: 'h-[13px] p-0 border-r border-b border-[#ededed] bg-white',
    box: 'h-[13px] p-0 border-r border-b border-[#484848] bg-white whitespace-nowrap',
    yellow: 'h-[13px] p-0 border-r border-b border-[#5a5a20] bg-[#fbff05] whitespace-nowrap',
    head: 'h-[13px] p-0 border-r border-b border-[#5a5a20] bg-[#fbff05] font-bold whitespace-nowrap',
    right: 'h-[13px] p-0 border-r border-b border-r-[#484848] border-b-[#ededed] bg-white',
    below: 'h-[13px] p-0 border-r border-b border-r-[#ededed] border-b-[#484848] bg-white',
  };
  const rowHeader = "p-0 border-r border-b border-[#858888] bg-[#4a4a4a] font-['Open_Sans',sans-serif] font-normal text-[10px] text-[#c8caca]";
  const counts = ['K Item', 144, 65, 68, 76, 76, 51, 63, 81];
  const support = ['Support', '39,45%', '17,81%', '18,63%', '20,82%', '20,82%', '13,97%', '17,26%', '22,19%'];
  const names = ['Item', 'Intro', 'DataMining', 'Survey', 'CatData', 'Regression', 'Forecast', 'DOE', 'SW'];
  const bits = ['11000000', '00100000', '01011001', '10000000', '11000000', '01000000', '10000000', '00010111', '10000000', '00010000', '10000000', '01000000', '01000000', '01100100', '01100000', '10110111', '10001000', '10000100', '10000000', '00001000', '00100000', '00001100', '10010000', '00000000'];
  const pairs = [
    ['Intro', 'DataMining', 20, '5,48%'], ['Intro', 'Survey', 22, '6,03%'], ['Intro', 'CatData', 26, '7,12%'], ['Intro', 'Regression', 26, '7,12%'],
    ['Intro', 'Forecast', 19, '5,21%'], ['Intro', 'DOE', 17, '4,66%'], ['Intro', 'SW', 35, '9,59%'],
    ['DataMining', 'Survey', 11, '3,01%'], ['DataMining', 'CatData', 18, '4,93%'], ['DataMining', 'Regression', 16, '4,38%'], ['DataMining', 'Forecast', 15, '4,11%'], ['DataMining', 'DOE', 9, '2,47%'], ['DataMining', 'SW', 14, '3,84%'],
    ['Survey', 'CatData', 23, '6,30%'], ['Survey', 'Regression', 9, '2,47%'], ['Survey', 'Forecast', 14, '3,84%'], ['Survey', 'DOE', 12, '3,29%'], ['Survey', 'SW', 18, '4,93%'],
    ['CatData', 'Regression', 20, '5,48%'], ['CatData', 'Forecast', 16, '4,38%'], ['CatData', 'DOE', 17, '4,66%'], ['CatData', 'SW', 23, '6,30%'],
  ];
  const td = (kind, text = '', span = 1) => `<td class="${tone[kind]}" colspan="${span}">${text}</td>`;

  document.getElementById('letters').innerHTML =
    `<tr><th class="h-[14px] p-0"><svg class="ml-[5px] size-2" viewBox="0 0 8 8"><path d="M8 0v8H0z" fill="#e8e8e8"/></svg></th><th class="border-r border-[#9a9d9d] p-0"></th>` +
    letters.map(l => `<th class="${l === 'Q'
      ? "h-[14px] p-0 border-r border-b border-r-[#9a9d9d] border-b-[#3f7d5b] bg-[#636565] font-['Open_Sans',sans-serif] font-normal text-[9px] text-[#dcdede]"
      : "h-[14px] p-0 border-r border-b border-r-[#9a9d9d] border-b-[#707474] bg-[#4b4d4e] font-['Open_Sans',sans-serif] font-normal text-[9px] text-[#dcdede]"}">${l}</th>`).join('') +
    `</tr><tr><td class="h-[39px] border-b border-[#858888] p-0"></td><td colspan="24" class="p-0"></td></tr>`;

  let html = '';
  for (let n = 1; n <= 27; n++) {
    html += `<tr class="${n % 3 === 0 ? 'h-[14px]' : 'h-[13px]'}"><th class="${rowHeader}">${n < 27 ? n : ''}</th><td class="border-r border-[#484848] p-0"></td>`;
    if (n < 3) {
      const row = n === 1 ? counts : support;
      html += row.map((v, i) => td(i ? 'box' : 'head', v)).join('');
    } else if (n === 3) {
      html += names.map(v => td('head', v)).join('');
    } else {
      html += td('box', n < 27 ? n - 3 : '') + [...bits[n - 4]].map(v => td('box', n < 27 ? v : '')).join('');
    }
    html += td(n > 2 ? 'right' : 'plain');
    if (n < 3) {
      html += td(n === 2 ? 'below' : 'plain').repeat(6);
    } else if (n === 3) {
      html += td('head', 'F2', 4) + td('head', 'Min Support') + td('box', '7%');
    } else if (n === 4) {
      html += td('head', 'Kombinasi') + td('head', '28', 2) + td('head', 'Frequent Itemset') + td('head', 'Support') + td('head', 'Hasil');
    } else {
      const p = pairs[n - 5], hit = [3, 4, 7].includes(n - 4), kind = hit ? 'yellow' : 'box';
      html += (p ? [n - 4, ...p, hit ? 'Gabung' : ''] : ['', '', '', '', '', '']).map(v => td(kind, v)).join('');
    }
    html += td('plain').repeat(7) + '</tr>';
  }
  document.getElementById('cells').innerHTML = html;
</script>
</body>
</html>
